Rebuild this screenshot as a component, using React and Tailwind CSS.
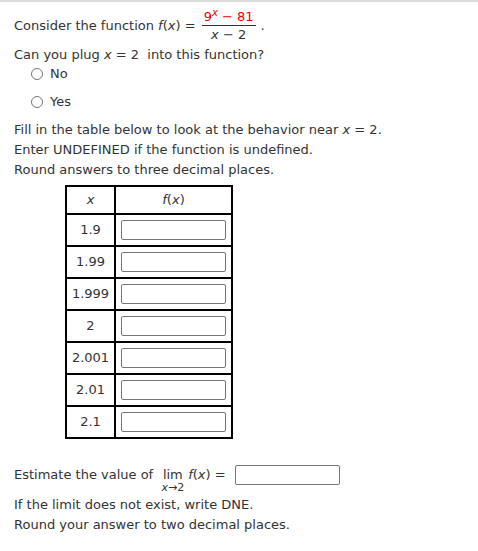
import React, { useState } from 'react';

const rows = ['1.9', '1.99', '1.999', '2', '2.001', '2.01', '2.1'];

const Radio = ({ label, checked, onChange }) => (
  <label className="flex items-center gap-[7px] h-[28px] pl-[17px] cursor-pointer">
    <span className="w-[12px] h-[12px] rounded-full border border-[#767676] bg-white flex items-center justify-center">
      {checked && <span className="w-[6px] h-[6px] rounded-full bg-[#333]" />}
    </span>
    <input type="radio" className="hidden" checked={checked} onChange={onChange} />
    <span>{label}</span>
  </label>
);

const App = () => {
  const [choice, setChoice] = useState('');
  const [values, setValues] = useState(rows.map(() => ''));
  const [limit, setLimit] = useState('');

  return (
    <div
      className="min-h-[551px] bg-white text-[#333] text-[13px] leading-[20px] border-t-2 border-[#dcdcdc]"
      style={{ fontFamily: '"DejaVu Sans", Verdana, sans-serif' }}
    >
      <div className="px-[14px] pt-[6px]">
        <div className="flex items-center h-[36px]">
          <span>Consider the function&nbsp;</span>
          <i>f</i>
          <span>(</span>
          <i>x</i>
          <span>)&nbsp;=&nbsp;</span>
          <span className="inline-flex flex-col items-center mx-[2px]">
            <span className="text-[#e00] leading-[16px] px-[2px]">
              9<sup className="text-[10px] italic">x</sup> − 81
            </span>
            <span className="w-full border-t border-[#333]" />
            <span className="leading-[18px]">
              <i>x</i> − 2
            </span>
          </span>
          <span className="ml-[3px]">.</span>
        </div>

        <div className="h-[20px] mt-[1px]">
          Can you plug <i>x</i> = 2&nbsp; into this function?
        </div>
        <div className="mt-[-5px]">
          <Radio label="No" checked={choice === 'no'} onChange={() => setChoice('no')} />
          <Radio label="Yes" checked={choice === 'yes'} onChange={() => setChoice('yes')} />
        </div>

        <div className="mt-[4px]">
          <div>
            Fill in the table below to look at the behavior near <i>x</i> = 2.
          </div>
          <div>Enter UNDEFINED if the function is undefined.</div>
          <div>Round answers to three decimal places.</div>
        </div>

        <table className="ml-[51px] mt-[5px] border-collapse border-2 border-black">
          <thead>
            <tr className="h-[28px]">
              <th className="w-[49px] border-2 border-black font-normal">
                <i>x</i>
              </th>
              <th className="w-[117px] border-2 border-black font-normal">
                <i>f</i>(<i>x</i>)
              </th>
            </tr>
          </thead>
          <tbody>
            {rows.map((r, i) => (
              <tr key={r} className="h-[32px]">
                <td className="border-2 border-black text-center px-[3px]">{r}</td>
                <td className="border-2 border-black px-[5px]">
                  <input
                    type="text"
                    value={values[i]}
                    onChange={(e) => {
                      const next = [...values];
                      next[i] = e.target.value;
                      setValues(next);
                    }}
                    className="block w-[105px] h-[20px] border border-[#767676] rounded-[2px] outline-none px-1"
                  />
                </td>
              </tr>
            ))}
          </tbody>
        </table>

        <div className="flex items-start mt-[26px]">
          <span className="leading-[20px]">Estimate the value of&nbsp;&nbsp;</span>
          <span className="inline-flex flex-col items-center">
            <span className="leading-[20px]">lim</span>
            <span className="text-[11px] leading-[10px] mt-[-2px]">
              <i>x</i>→2
            </span>
          </span>
          <span className="leading-[20px] ml-[4px]">
            <i>f</i>(<i>x</i>)&nbsp;=&nbsp;
          </span>
          <input
            type="text"
            value={limit}
            onChange={(e) => setLimit(e.target.value)}
            className="ml-[5px] w-[105px] h-[20px] border border-[#767676] rounded-[2px] outline-none px-1"
          />
        </div>

        <div className="mt-[2px]">If the limit does not exist, write DNE.</div>
        <div>Round your answer to two decimal places.</div>
      </div>
    </div>
  );
};

export default App;
